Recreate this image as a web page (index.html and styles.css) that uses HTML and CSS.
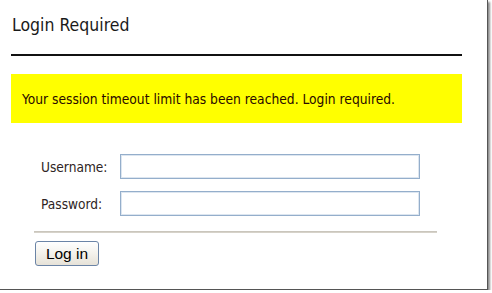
FILE: index.html
```html
<!DOCTYPE html>
<html>
<head>
<meta charset="utf-8">
<title>Login Required</title>
<link rel="stylesheet" href="styles.css">
</head>
<body>
<div class="frame">
  <div class="content">
    <h1 class="title">Login Required</h1>
    <div class="rule"></div>
    <div class="message">Your session timeout limit has been reached. Login required.</div>
    <form class="login">
      <div class="fields">
        <label class="label" for="u">Username:</label>
        <input class="input" id="u" type="text">
        <label class="label" for="p">Password:</label>
        <input class="input" id="p" type="password">
      </div>
      <div class="sep"></div>
      <button class="btn" type="button">Log in</button>
    </form>
  </div>
</div>
</body>
</html>
```

FILE: styles.css
```css
html, body {
  margin: 0;
  padding: 0;
  background: #fff;
}
.frame {
  width: 487px;
  height: 289px;
  border-right: 1px solid #555;
  border-bottom: 1px solid #555;
  box-shadow: 2px 2px 2px rgba(0,0,0,0.45);
  box-sizing: content-box;
  overflow: hidden;
}
.content {
  padding: 14px 25px 0 11px;
}
.title {
  margin: 0;
  font-family: "DejaVu Sans Condensed", "DejaVu Sans", sans-serif;
  font-weight: normal;
  font-size: 17.5px;
  line-height: 22px;
  color: #1a1a1a;
  padding-left: 1px;
}
.rule {
  margin-top: 18px;
  height: 2px;
  background: #111;
}
.message {
  margin-top: 18px;
  height: 49px;
  background: #ffff00;
  display: flex;
  align-items: center;
  padding: 0 11px;
  font-family: "DejaVu Sans Condensed", "DejaVu Sans", sans-serif;
  font-size: 13.7px;
  color: #2a0a00;
}
.login {
  margin: 31px 0 0 0;
}
.fields {
  display: grid;
  grid-template-columns: 79px 300px;
  row-gap: 12px;
  margin-left: 30px;
  align-items: center;
}
.label {
  font-family: "DejaVu Sans Condensed", "DejaVu Sans", sans-serif;
  font-size: 13.6px;
  color: #2e2424;
}
.input {
  box-sizing: border-box;
  width: 300px;
  height: 25px;
  margin: 0;
  border: 1px solid #94aecb;
  box-shadow: inset 0 0 0 1px #dde6f0;
  background: #fff;
  outline: none;
}
.sep {
  margin: 15px 0 0 23px;
  width: 403px;
  height: 2px;
  background: linear-gradient(#c4c0b6, #dcd8d0);
}
.btn {
  display: block;
  margin: 8px 0 0 24px;
  width: 64px;
  height: 25px;
  padding: 0;
  border: 1px solid #6b84a6;
  border-radius: 3px;
  background: linear-gradient(#ffffff, #f4f2ec 50%, #e6e2d8);
  font-family: "Liberation Sans", Arial, sans-serif;
  font-size: 15.5px;
  color: #000;
  line-height: 23px;
}
```
